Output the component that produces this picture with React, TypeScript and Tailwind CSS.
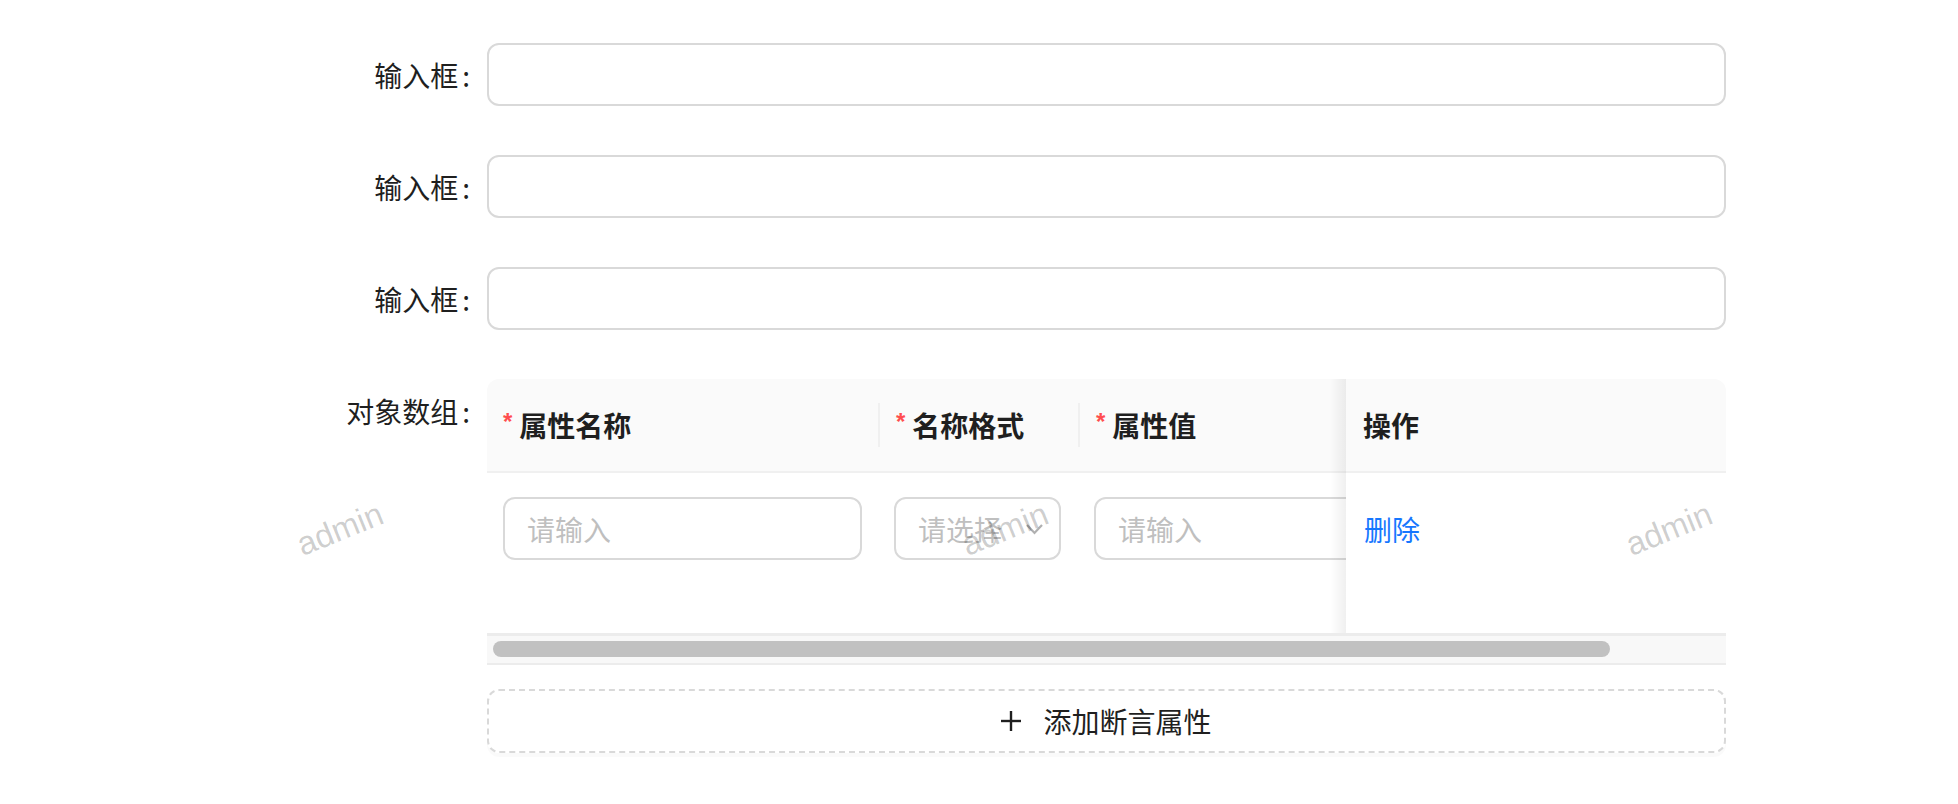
import React from 'react';

const Label = ({ text }: { text: string }) => (
    <div className="w-[187px] shrink-0 h-[63px] flex items-center justify-end pr-[17px] text-[28px] leading-[44px] text-[#1f1f1f]">
        {text}
        <span className="ml-[4px]">:</span>
    </div>
);

const TextInput = ({ placeholder, className = '' }: { placeholder?: string; className?: string }) => (
    <div className={`h-[63px] border-2 border-[#d9d9d9] rounded-[12px] bg-white flex items-center pl-[22px] text-[28px] text-[#bfbfbf] ${className}`}>
        {placeholder}
    </div>
);

const Required = () => <span className="text-[#ff4d4f] text-[24px] leading-none mr-[7px] mt-[-6px] font-['Liberation_Sans',sans-serif]">*</span>;

const Divider = () => <div className="w-[2px] h-[44px] bg-[#f0f0f0] shrink-0"></div>;

const Watermark = ({ pos }: { pos: string }) => (
    <span className={`absolute ${pos} -translate-x-1/2 -translate-y-1/2 -rotate-[22deg] text-[33px] text-black/20 font-['Liberation_Sans',sans-serif] select-none`}>
        admin
    </span>
);

export default function App() {
    return (
        <div className="relative min-h-[804px] bg-white pt-[43px] pl-[300px] font-['Noto_Sans_CJK_SC','Noto_Sans',sans-serif] overflow-hidden">
            <div className="flex flex-col gap-[49px]">
                {[0, 1, 2].map((i) => (
                    <div key={i} className="flex">
                        <Label text="输入框" />
                        <TextInput className="w-[1239px]" />
                    </div>
                ))}

                <div className="flex">
                    <Label text="对象数组" />
                    <div className="w-[1239px]">
                        {/* table */}
                        <div className="flex rounded-t-[12px] overflow-hidden">
                            <div className="flex-1 overflow-hidden">
                                <div className="w-[1100px]">
                                    {/* header */}
                                    <div className="flex items-center h-[94px] bg-[#fafafa] border-b-2 border-[#f0f0f0] text-[28px] font-semibold text-[#1f1f1f]">
                                        <div className="w-[391px] flex items-center pl-[16px]">
                                            <Required />属性名称
                                        </div>
                                        <Divider />
                                        <div className="w-[198px] flex items-center pl-[16px]">
                                            <Required />名称格式
                                        </div>
                                        <Divider />
                                        <div className="flex-1 flex items-center pl-[16px]">
                                            <Required />属性值
                                        </div>
                                    </div>
                                    {/* body */}
                                    <div className="flex items-start h-[160px] pt-[24px]">
                                        <div className="w-[391px] pl-[16px]">
                                            <TextInput placeholder="请输入" className="w-[359px]" />
                                        </div>
                                        <div className="w-[200px] pl-[16px]">
                                            <div className="w-[167px] h-[63px] border-2 border-[#d9d9d9] rounded-[12px] flex items-center justify-between pl-[22px] pr-[16px] text-[28px] text-[#bfbfbf]">
                                                请选择
                                                <svg width="17" height="12" viewBox="0 0 17 12" fill="none" stroke="#b0b0b0" strokeWidth="2.2">
                                                    <polyline points="1,2 8.5,10 16,2" />
                                                </svg>
                                            </div>
                                        </div>
                                        <div className="flex-1 pl-[16px]">
                                            <TextInput placeholder="请输入" className="w-[420px]" />
                                        </div>
                                    </div>
                                </div>
                            </div>
                            {/* fixed action column */}
                            <div className="relative w-[380px] shrink-0 bg-white">
                                <div className="absolute top-0 bottom-0 left-[-16px] w-[16px] bg-gradient-to-l from-black/[0.06] to-transparent"></div>
                                <div className="h-[94px] bg-[#fafafa] border-b-2 border-[#f0f0f0] flex items-center pl-[17px] text-[28px] font-semibold text-[#1f1f1f]">
                                    操作
                                </div>
                                <div className="h-[160px] pt-[24px] pl-[18px]">
                                    <div className="h-[63px] flex items-center text-[28px] text-[#1677ff]">删除</div>
                                </div>
                            </div>
                        </div>
                        {/* horizontal scrollbar */}
                        <div className="h-[32px] border-t-[3px] border-b-2 border-[#ececec] bg-[#f8f8f8] pt-[5px] pl-[6px]">
                            <div className="w-[1117px] h-[16px] rounded-full bg-[#c1c1c1]"></div>
                        </div>
                        {/* add button */}
                        <div className="mt-[24px] h-[64px] border-2 border-dashed border-[#d9d9d9] rounded-[12px] flex items-center justify-center gap-[22px] text-[28px] text-[#1f1f1f] shadow-[0_4px_0_rgba(0,0,0,0.02)]">
                            <svg width="20" height="20" viewBox="0 0 20 20" stroke="#1f1f1f" strokeWidth="2.4">
                                <line x1="10" y1="0" x2="10" y2="20" />
                                <line x1="0" y1="10" x2="20" y2="10" />
                            </svg>
                            <span>添加断言属性</span>
                        </div>
                    </div>
                </div>
            </div>

            {/* watermark overlay */}
            <div className="absolute inset-0 pointer-events-none">
                <Watermark pos="left-[340px] top-[529px]" />
                <Watermark pos="left-[1005px] top-[529px]" />
                <Watermark pos="left-[1669px] top-[529px]" />
            </div>
        </div>
    );
}
